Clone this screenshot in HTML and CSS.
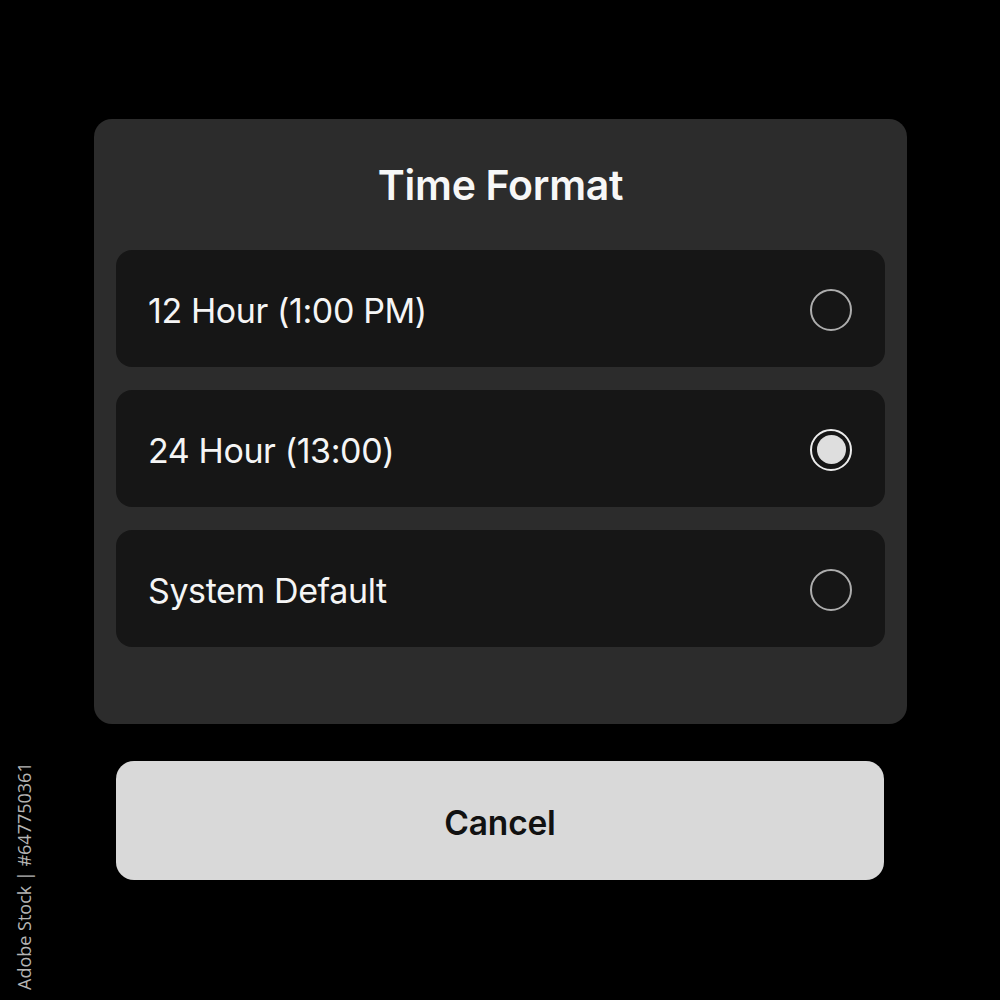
FILE: index.html
```html
<!DOCTYPE html>
<html lang="en">
<head>
<meta charset="utf-8">
<title>Time Format</title>
<link rel="stylesheet" href="styles.css">
</head>
<body>
<div class="stage">
  <div class="sheet">
    <h1 class="title">Time Format</h1>
    <div class="options">
      <div class="option">
        <span class="label">12 Hour (1:00 PM)</span>
        <span class="radio"></span>
      </div>
      <div class="option">
        <span class="label">24 Hour (13:00)</span>
        <span class="radio selected"></span>
      </div>
      <div class="option">
        <span class="label">System Default</span>
        <span class="radio"></span>
      </div>
    </div>
  </div>
  <div class="cancel">Cancel</div>
</div>
<div class="credit">Adobe Stock | #647750361</div>
</body>
</html>
```
FILE: styles.css
```css
html, body {
  margin: 0;
  padding: 0;
  background: #000;
}
body {
  width: 1000px;
  height: 1000px;
  position: relative;
  overflow: hidden;
  font-family: Inter, "Noto Sans", sans-serif;
}
.stage {
  padding: 119px 0 0 94px;
  display: flex;
  flex-direction: column;
  align-items: flex-start;
}
.sheet {
  width: 813px;
  height: 605px;
  box-sizing: border-box;
  background: #2c2c2c;
  border-radius: 18px;
  padding: 43px 22px 0;
  display: flex;
  flex-direction: column;
}
.title {
  margin: 0;
  height: 46px;
  line-height: 46px;
  text-align: center;
  color: #f7f7f7;
  font-size: 41px;
  font-weight: 600;
  letter-spacing: -0.3px;
}
.options {
  margin-top: 42px;
  display: flex;
  flex-direction: column;
  gap: 23px;
}
.option {
  height: 117px;
  box-sizing: border-box;
  background: #161616;
  border-radius: 16px;
  display: flex;
  align-items: center;
  justify-content: space-between;
  padding: 2px 33px 0 32px;
}
.label {
  color: #f5f5f5;
  font-size: 34px;
  font-weight: 400;
  letter-spacing: -0.4px;
  margin-top: 2px;
}
.radio {
  width: 42px;
  height: 42px;
  box-sizing: border-box;
  border: 2px solid #adadad;
  border-radius: 50%;
  display: flex;
  align-items: center;
  justify-content: center;
}
.radio.selected {
  border: 2.5px solid #ececec;
}
.radio.selected::after {
  content: "";
  width: 29px;
  height: 29px;
  border-radius: 50%;
  background: #dedede;
}
.cancel {
  margin: 37px 0 0 22px;
  width: 768px;
  height: 119px;
  box-sizing: border-box;
  padding-top: 5px;
  background: #d9d9d9;
  border-radius: 18px;
  display: flex;
  align-items: center;
  justify-content: center;
  color: #111;
  font-size: 33.5px;
  font-weight: 600;
  letter-spacing: -0.2px;
}
.credit {
  position: absolute;
  left: 11px;
  top: 767px;
  width: 26px;
  height: 223px;
  writing-mode: vertical-rl;
  transform: rotate(180deg);
  color: #b5b5b5;
  font-family: "Open Sans", "Noto Sans", sans-serif;
  font-size: 18px;
  line-height: 26px;
  white-space: nowrap;
  text-align: right;
}
```
